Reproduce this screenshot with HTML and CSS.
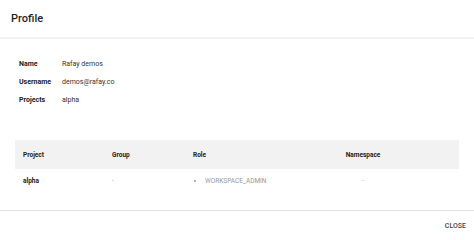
FILE: index.html
```html
<!DOCTYPE html>
<html lang="en">
<head>
  <meta charset="UTF-8" />
  <meta name="viewport" content="width=device-width, initial-scale=1.0"/>
  <title>Profile</title>
  <link rel="stylesheet" href="styles.css">
</head>
<body>
  <div class="dialog">
    <div class="dialog-title">Profile</div>

    <div class="dialog-body">
      <div class="info">
        <div class="info-row">
          <span class="info-label">Name</span>
          <span class="info-value">Rafay demos</span>
        </div>
        <div class="info-row">
          <span class="info-label">Username</span>
          <span class="info-value">demos@rafay.co</span>
        </div>
        <div class="info-row">
          <span class="info-label">Projects</span>
          <span class="info-value">alpha</span>
        </div>
      </div>

      <table class="roles">
        <thead>
          <tr>
            <th class="col-project">Project</th>
            <th class="col-group">Group</th>
            <th class="col-role">Role</th>
            <th class="col-ns">Namespace</th>
          </tr>
        </thead>
        <tbody>
          <tr>
            <td class="col-project strong">alpha</td>
            <td class="col-group muted">-</td>
            <td class="col-role">
              <ul class="role-list">
                <li>WORKSPACE_ADMIN</li>
              </ul>
            </td>
            <td class="col-ns muted">-</td>
          </tr>
        </tbody>
      </table>
    </div>

    <div class="dialog-actions">
      <button class="btn-text">Close</button>
    </div>
  </div>
</body>
</html>
```

FILE: styles.css
```css
body {
  margin: 0;
  font-family: Roboto, "Liberation Sans", Arial, sans-serif;
  color: #222;
  background: #fff;
}
.dialog {
  width: 474px;
  height: 240px;
  display: flex;
  flex-direction: column;
}
.dialog-title {
  height: 37px;
  display: flex;
  align-items: center;
  padding-left: 11px;
  font-size: 11px;
  font-weight: 500;
  color: #1f1f1f;
  border-bottom: 2px solid #f2f2f2;
}
.dialog-body {
  padding: 16px 15px 17px;
  border-bottom: 1px solid #e2e2e2;
}
.info {
  padding-left: 4px;
}
.info-row {
  height: 18px;
  display: flex;
  align-items: center;
  font-size: 7px;
}
.info-label {
  width: 43px;
  font-weight: bold;
  color: #222;
}
.info-value {
  color: #333;
}
.roles {
  margin-top: 31px;
  width: 444px;
  border-collapse: collapse;
  table-layout: fixed;
  font-size: 6.5px;
}
.roles th {
  height: 29px;
  padding: 0 0 0 8px;
  background: #f2f2f2;
  text-align: left;
  font-weight: bold;
  color: #222;
}
.roles td {
  height: 24px;
  padding: 0 0 0 8px;
}
.col-project {
  width: 81px;
}
.col-group {
  width: 73px;
}
.col-role {
  width: 74px;
}
.roles .col-ns {
  text-align: center;
  padding-left: 0;
}
.strong {
  font-weight: bold;
  color: #222;
}
.muted {
  color: #aaa;
}
.role-list {
  margin: 0;
  padding-left: 12px;
  color: #999;
}
.dialog-actions {
  flex: 1;
  display: flex;
  justify-content: flex-end;
  align-items: center;
  padding-right: 4px;
}
.btn-text {
  background: none;
  border: none;
  font-family: inherit;
  font-size: 7px;
  font-weight: 500;
  text-transform: uppercase;
  color: #444;
  padding: 6px 4px;
  cursor: pointer;
}
```
